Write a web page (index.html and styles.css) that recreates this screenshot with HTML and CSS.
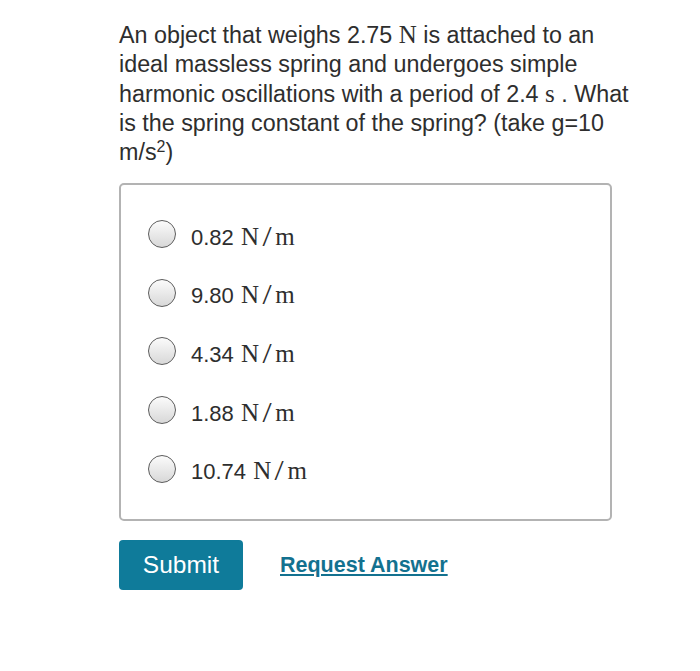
FILE: index.html
```html
<!DOCTYPE html>
<html>
<head>
<meta charset="utf-8">
<link rel="stylesheet" href="styles.css">
</head>
<body>
<div class="page">
  <p class="question">An object that weighs 2.75 <span class="math">N</span> is attached to an ideal massless spring and undergoes simple harmonic oscillations with a period of 2.4 <span class="math">s</span> . What is the spring constant of the spring? (take g=10 m/s<sup>2</sup>)</p>
  <div class="choices">
    <label class="choice"><span class="radio"></span><span class="label">0.82 <span class="math unit">N<span class="slash">/</span>m</span></span></label>
    <label class="choice"><span class="radio"></span><span class="label">9.80 <span class="math unit">N<span class="slash">/</span>m</span></span></label>
    <label class="choice"><span class="radio"></span><span class="label">4.34 <span class="math unit">N<span class="slash">/</span>m</span></span></label>
    <label class="choice"><span class="radio"></span><span class="label">1.88 <span class="math unit">N<span class="slash">/</span>m</span></span></label>
    <label class="choice"><span class="radio"></span><span class="label">10.74 <span class="math unit">N<span class="slash">/</span>m</span></span></label>
  </div>
  <div class="actions">
    <button class="submit">Submit</button>
    <a class="request" href="#">Request Answer</a>
  </div>
</div>
</body>
</html>
```
FILE: styles.css
```css
html, body {
  margin: 0;
  padding: 0;
  background: #fff;
}
body {
  font-family: "Liberation Sans", Arial, sans-serif;
  color: #2e2e2e;
}
.page {
  width: 540px;
  padding: 20px 0 0 119px;
}
.question {
  margin: 0;
  font-size: 23.3px;
  line-height: 29px;
  width: 525px;
}
.question sup {
  font-size: 16px;
  line-height: 0;
  vertical-align: 8px;
}
.math {
  font-family: "Liberation Serif", "DejaVu Serif", serif;
  font-size: 25px;
}
.choices {
  margin-top: 16px;
  width: 493px;
  height: 338px;
  border: 2px solid #b3b3b3;
  border-radius: 5px;
  box-sizing: border-box;
  padding: 35px 0 0 27px;
  display: flex;
  flex-direction: column;
  gap: 30.7px;
}
.choice {
  display: flex;
  align-items: center;
  height: 28px;
  font-size: 22px;
}
.radio {
  width: 26px;
  height: 26px;
  border: 1.5px solid #5c5c5c;
  border-radius: 50%;
  background: linear-gradient(#fbfbfb, #d8d8d8);
  margin-right: 15px;
  flex: none;
}
.label {
  line-height: 28px;
  white-space: nowrap;
  position: relative;
  top: 2px;
}
.unit {
  font-size: 25px;
  margin-left: 1px;
}
.slash {
  display: inline-block;
  font-size: 30px;
  margin: 0 4px;
  transform: scaleX(1.1);
  position: relative;
  top: 1px;
}
.actions {
  margin-top: 19px;
  display: flex;
  align-items: center;
  gap: 37px;
}
.submit {
  width: 124px;
  height: 50px;
  background: #0f7b9a;
  color: #fff;
  border: none;
  border-radius: 4px;
  font-family: "Liberation Sans", Arial, sans-serif;
  font-size: 24.5px;
  padding: 0;
}
.request {
  color: #13718f;
  font-weight: bold;
  font-size: 21.5px;
  text-decoration: underline;
  text-underline-offset: 2px;
}
```
